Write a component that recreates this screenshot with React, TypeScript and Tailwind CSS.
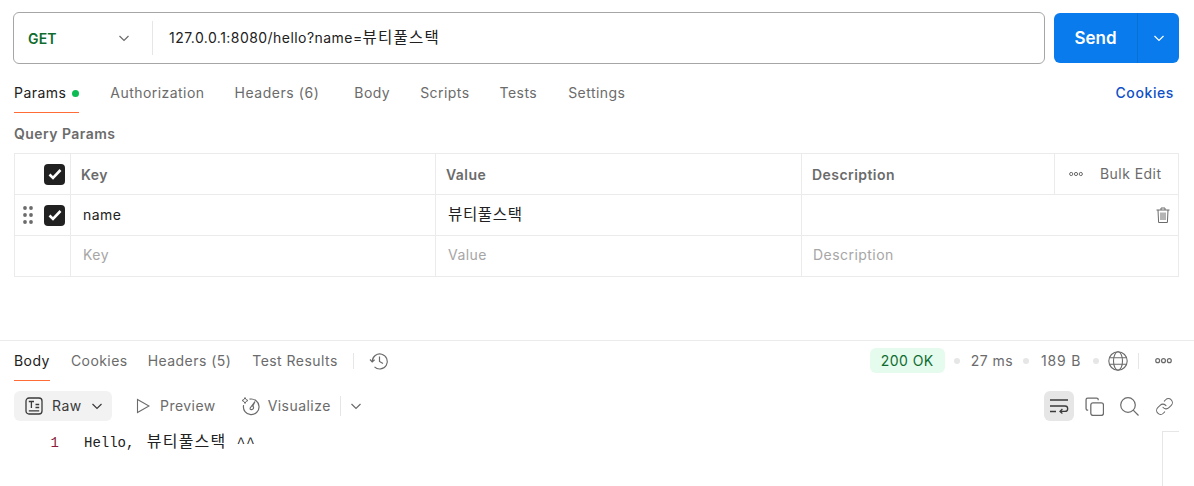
import React from "react";
import { Link as LinkIcon } from "lucide-react";

const font = { fontFamily: "Inter, 'Noto Sans CJK KR', sans-serif", letterSpacing: "0.45px" };

function Ko({ children, spacing = "tracking-[0.4px]" }: { children: React.ReactNode; spacing?: string }) {
  return <span className={"text-[15.5px] leading-[17px] " + spacing}>{children}</span>;
}

function Check() {
  return (
    <span className="flex h-[21px] w-[21px] items-center justify-center rounded-[4px] bg-[#212121]">
      <svg width="14" height="12" viewBox="0 0 14 12" fill="none">
        <path d="M1.5 6.5L5 10L12.5 2" stroke="#fff" strokeWidth="2.6" />
      </svg>
    </span>
  );
}

function Chevron({ color = "#6b6b6b", size = 12 }: { color?: string; size?: number }) {
  return (
    <svg width={size} height={size} viewBox="0 0 12 12" fill="none">
      <path d="M1.5 4L6 8.5L10.5 4" stroke={color} strokeWidth="1.2" />
    </svg>
  );
}

function Dots({ color = "#6b6b6b", width = 14 }: { color?: string; width?: number }) {
  return (
    <svg width={width} height={(width * 6) / 14} viewBox="0 0 14 6" fill="none">
      <circle cx="2.2" cy="3" r="1.6" stroke={color} />
      <circle cx="7" cy="3" r="1.6" stroke={color} />
      <circle cx="11.8" cy="3" r="1.6" stroke={color} />
    </svg>
  );
}

function Sep() {
  return <span className="block h-[6px] w-[6px] rounded-full bg-[#e6e6e6]" />;
}

export default function App() {
  return (
    <div className="h-[486px] w-[1194px] overflow-hidden bg-white text-[14px] text-[#6b6b6b]" style={font}>
      <div className="flex gap-[9px] pl-[13px] pr-[15px] pt-[12px]">
        <div className="flex h-[52px] w-[1032px] items-center rounded-[6px] border border-[#a6a6a6]">
          <div className="flex w-[138px] items-center pl-[14px] pr-[22px]">
            <span className="flex-1 text-[14px] font-semibold tracking-[0.2px] text-[#0f6b2e]">GET</span>
            <Chevron />
          </div>
          <div className="h-[34px] w-px bg-[#e6e6e6]" />
          <span className="flex items-center pb-[2px] pl-[16px] text-[14px] text-[#212121]">127.0.0.1:8080/hello?name=<Ko spacing="tracking-[1.2px]">뷰티풀스택</Ko></span>
        </div>
        <div className="mt-px flex h-[50px] w-[125px] overflow-hidden rounded-[6px] bg-[#097bed] text-white">
          <span className="flex w-[84px] items-center justify-center border-r border-[#0a6fd4] pt-[2px] text-[17px] font-semibold tracking-normal">Send</span>
          <span className="flex flex-1 items-center justify-center"><Chevron color="#fff" /></span>
        </div>
      </div>

      <div className="mt-[12px] flex h-[37px] items-center pb-[4px] pl-[14px] pr-[20px]">
        <div className="relative flex h-full items-center gap-[6px] text-[#212121]">
          Params <span className="mt-[1px] h-[7px] w-[7px] rounded-full bg-[#0cbb52]" />
          <span className="absolute bottom-[-4px] left-0 right-0 h-px bg-[#ff6c37]" />
        </div>
        <span className="ml-[31px]">Authorization</span>
        <span className="ml-[30px] tracking-[0.55px]">Headers (6)</span>
        <span className="ml-[35px]">Body</span>
        <span className="ml-[30px]">Scripts</span>
        <span className="ml-[30px]">Tests</span>
        <span className="ml-[31px]">Settings</span>
        <span className="ml-auto font-medium tracking-[0.6px] text-[#0f4fc7]">Cookies</span>
      </div>

      <div className="mt-[12px] pl-[14px] font-semibold leading-[17px]">Query Params</div>

      <div className="ml-[14px] mt-[11px] w-[1165px] border-x border-t border-[#ebebeb]">
        <div className="flex h-[41px] border-b border-[#ebebeb] font-semibold">
          <div className="flex w-[56px] items-center justify-end border-r border-[#ebebeb] pr-[5px]"><Check /></div>
          <div className="flex w-[365px] items-center border-r border-[#ebebeb] pl-[10px]">Key</div>
          <div className="flex w-[366px] items-center border-r border-[#ebebeb] pl-[10px]">Value</div>
          <div className="flex w-[253px] items-center border-r border-[#ebebeb] pl-[10px]">Description</div>
          <div className="flex flex-1 items-center gap-[17px] pb-[1px] pl-[14px] font-normal"><Dots /> Bulk Edit</div>
        </div>
        <div className="flex h-[41px] border-b border-[#ebebeb]">
          <div className="flex w-[56px] items-center justify-between border-r border-[#ebebeb] pl-[8px] pr-[5px]">
            <svg width="10" height="18" viewBox="0 0 10 18" fill="#6b6b6b">
              <circle cx="2" cy="2" r="1.9" /><circle cx="8" cy="2" r="1.9" />
              <circle cx="2" cy="9" r="1.9" /><circle cx="8" cy="9" r="1.9" />
              <circle cx="2" cy="16" r="1.9" /><circle cx="8" cy="16" r="1.9" />
            </svg>
            <Check />
          </div>
          <div className="flex w-[365px] items-center border-r border-[#ebebeb] pb-[2px] pl-[12px] text-[#212121]">name</div>
          <div className="flex w-[366px] items-center border-r border-[#ebebeb] pb-[2px] pl-[12px] text-[#212121]"><Ko spacing="tracking-[0.65px]">뷰티풀스택</Ko></div>
          <div className="flex flex-1 items-center justify-end pr-[8px]">
            <svg width="14" height="16" viewBox="0 0 14 16" fill="none" stroke="#6b6b6b">
              <path d="M0.5 3H13.5M5 3V1H9V3M2 3L2.6 15.5H11.4L12 3M5 5.5V13M7 5.5V13M9 5.5V13" />
            </svg>
          </div>
        </div>
        <div className="flex h-[41px] border-b border-[#ebebeb] text-[#a6a6a6]">
          <div className="w-[56px] border-r border-[#ebebeb]" />
          <div className="flex w-[365px] items-center border-r border-[#ebebeb] pb-[3px] pl-[12px]">Key</div>
          <div className="flex w-[366px] items-center border-r border-[#ebebeb] pb-[3px] pl-[12px]">Value</div>
          <div className="flex flex-1 items-center pb-[3px] pl-[11px]">Description</div>
        </div>
      </div>

      <div className="mt-[63px] border-t border-[#ebebeb]">
        <div className="flex h-[40px] items-center pb-[1px] pl-[14px] pr-[22px]">
          <div className="relative flex h-full items-center text-[#212121]">
            Body
            <span className="absolute bottom-[-1px] left-0 right-0 h-px bg-[#ff6c37]" />
          </div>
          <span className="ml-[21px]">Cookies</span>
          <span className="ml-[20px]">Headers (5)</span>
          <span className="ml-[21px]">Test Results</span>
          <span className="ml-[15px] h-[16px] w-px bg-[#e6e6e6]" />
          <svg className="ml-[15px]" width="20" height="20" viewBox="0 0 20 20" fill="none" stroke="#6b6b6b" strokeWidth="1.2">
            <path d="M1 8.5L3.2 11L5.6 8.8" />
            <path d="M3.3 10.5A7.5 7.5 0 1 1 5.5 15.8" />
            <path d="M10.5 5.5V10.5L14 12.5" />
          </svg>
          <div className="ml-auto flex items-center">
            <span className="flex h-[25px] w-[75px] items-center justify-center rounded-[6px] bg-[#e5fbee] text-[#0f6b2e]">200 OK</span>
            <span className="ml-[9px]"><Sep /></span>
            <span className="ml-[11px]">27 ms</span>
            <span className="ml-[10px]"><Sep /></span>
            <span className="ml-[12px] w-[41px] whitespace-nowrap tracking-[0.8px]">189 B</span>
            <span className="ml-[11px]"><Sep /></span>
            <svg className="ml-[9px]" width="20" height="20" viewBox="0 0 20 20" fill="none" stroke="#6b6b6b" strokeWidth="1.1">
              <circle cx="10" cy="10" r="9.2" />
              <ellipse cx="10" cy="10" rx="4.5" ry="9.2" />
              <path d="M1.6 6.7H18.4M1.6 13.3H18.4" />
            </svg>
            <span className="ml-[10px] h-[16px] w-px bg-[#e6e6e6]" />
            <span className="ml-[16px] flex"><Dots width={17} /></span>
          </div>
        </div>

        <div className="mt-[10px] flex h-[30px] items-center pl-[14px] pr-[20px]">
          <div className="flex h-full w-[98px] items-center gap-[9px] rounded-[6px] bg-[#f2f2f2] pl-[11px] text-[#212121]">
            <svg width="18" height="18" viewBox="0 0 18 18" fill="none" stroke="#3a3a3a" strokeWidth="1.3">
              <rect x="1" y="1" width="16" height="16" rx="3" />
              <path d="M3.8 4.5H9M6.4 4.5V11M10.5 7.5H14.2M10.5 10.5H14.2M3.8 13.8H14.2" />
            </svg>
            <span className="pb-[1px] text-[#3a3a3a]">Raw</span>
            <Chevron color="#3a3a3a" />
          </div>
          <svg className="ml-[24px]" width="14" height="16" viewBox="0 0 14 16" fill="none" stroke="#6b6b6b" strokeWidth="1.1">
            <path d="M1.5 1.5L13 8L1.5 14.5Z" />
          </svg>
          <span className="ml-[10px] pb-[1px]">Preview</span>
          <svg className="ml-[25px]" width="20" height="20" viewBox="0 0 20 20" fill="none" stroke="#6b6b6b" strokeWidth="1.2">
            <path d="M8.5 3.2A7.8 7.8 0 1 1 2.6 9.2" />
            <path d="M8.8 12.5A2 2 0 1 0 11.8 10L14 5.5L8.8 12.5" />
            <path d="M4 1.5L5 3.5L7 4.5L5 5.5L4 7.5L3 5.5L1 4.5L3 3.5Z" strokeWidth="1" />
          </svg>
          <span className="ml-[7px] pb-[1px]">Visualize</span>
          <span className="ml-[9px] h-[20px] w-px bg-[#e6e6e6]" />
          <span className="ml-[9px]"><Chevron /></span>

          <div className="ml-auto flex items-center">
            <span className="flex h-[30px] w-[30px] items-center justify-center rounded-[6px] bg-[#e6e6e6]">
              <svg width="20" height="16" viewBox="0 0 20 16" fill="none" stroke="#3a3a3a" strokeWidth="1.3">
                <path d="M1 2H19M1 8H16A2.6 2.6 0 0 1 16 13.4H11M13.4 11L11 13.4L13.4 15.5M1 13.5H7" />
              </svg>
            </span>
            <svg className="ml-[11px]" width="19" height="19" viewBox="0 0 18 18" fill="none" stroke="#6b6b6b" strokeWidth="1.2">
              <rect x="5.5" y="5.5" width="12" height="12" rx="2" />
              <path d="M3 12.5H2.5A1.5 1.5 0 0 1 1 11V2.5A1.5 1.5 0 0 1 2.5 1H11A1.5 1.5 0 0 1 12.5 2.5V3" />
            </svg>
            <svg className="ml-[16px]" width="19" height="19" viewBox="0 0 19 19" fill="none" stroke="#6b6b6b" strokeWidth="1.2">
              <circle cx="8" cy="8" r="7.3" />
              <path d="M13.2 13.2L18.5 18.5" />
            </svg>
            <LinkIcon className="ml-[16px]" size={19} color="#6b6b6b" strokeWidth={1.3} />
          </div>
        </div>

        <div className="relative mt-[10px] flex h-[56px] items-start">
          <span className="w-[59px] pt-[3px] text-right text-[14px] leading-[18px] tracking-normal text-[#8a1c3a]" style={{ fontFamily: "'Liberation Mono', monospace" }}>1</span>
          <span className="ml-[25px] pt-[3px] text-[14px] leading-[18px] tracking-normal text-[#212121]" style={{ fontFamily: "'Liberation Mono', 'Noto Sans CJK KR', monospace" }}>Hello, <span className="ml-[4px] text-[16px] tracking-[1.2px]">뷰티풀스택</span> <span className="ml-[2px] tracking-[1px]">^^</span></span>
          <span className="absolute right-[15px] top-0 h-full w-[17px] border-l border-t border-[#e6e6e6]" />
        </div>
      </div>
    </div>
  );
}
